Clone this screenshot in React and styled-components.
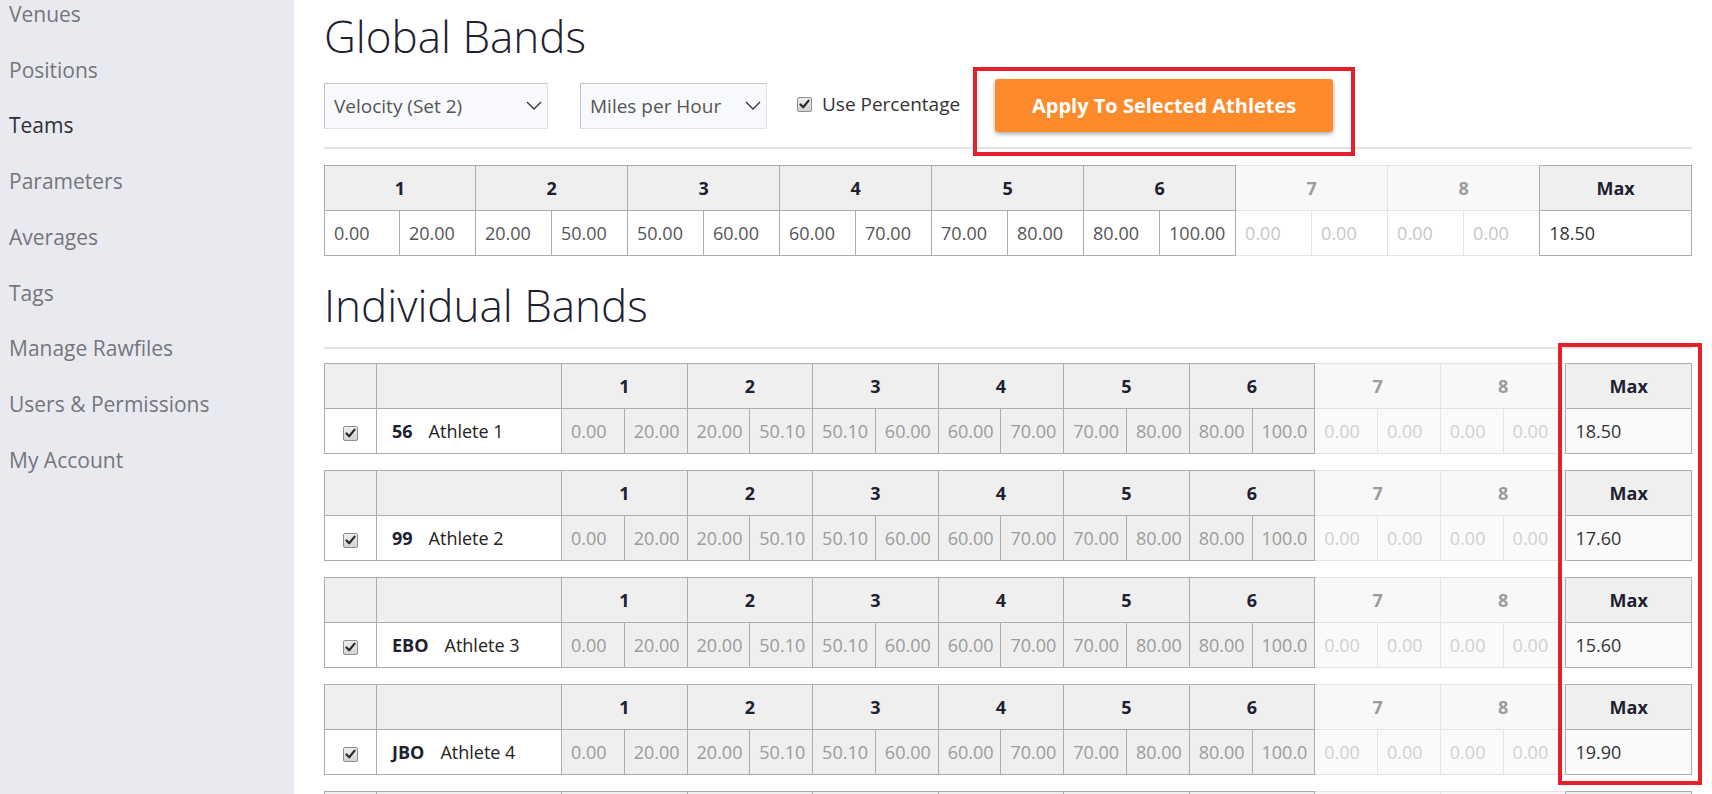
import React from 'react';
import styled, { createGlobalStyle, css } from 'styled-components';

const GlobalStyle = createGlobalStyle`
    html, body {
        margin: 0;
        padding: 0;
        overflow: hidden;
        background: #ffffff;
    }
    body {
        font-family: "Open Sans", "Noto Sans", sans-serif;
        color: #333;
    }
`;

const DARK = '#adadad';
const LIGHT = '#e4e4e4';

const navItems = ['Venues', 'Positions', 'Teams', 'Parameters', 'Averages', 'Tags', 'Manage Rawfiles', 'Users & Permissions', 'My Account'];

const globalBands = [[0, 20], [20, 50], [50, 60], [60, 70], [70, 80], [80, 100], [0, 0], [0, 0]];
const athleteBands = [[0, 20], [20, 50.1], [50.1, 60], [60, 70], [70, 80], [80, 100], [0, 0], [0, 0]];

const athletes = [
    { code: '56', name: 'Athlete 1', max: '18.50' },
    { code: '99', name: 'Athlete 2', max: '17.60' },
    { code: 'EBO', name: 'Athlete 3', max: '15.60' },
    { code: 'JBO', name: 'Athlete 4', max: '19.90' },
    { code: 'KBO', name: 'Athlete 5', max: '16.80' },
];

const fmt = (v) => v.toFixed(2);

const App = () => {
    return (
        <>
            <GlobalStyle />
            <Layout>
                <Sidebar>
                    <NavList>
                        {navItems.map(item => (
                            <NavItem key={item} $active={item === 'Teams'}>{item}</NavItem>
                        ))}
                    </NavList>
                </Sidebar>
                <Main>
                    <Content>
                        <Title>Global Bands</Title>
                        <Controls>
                            <SelectBox $w={224} $mr={32}>
                                Velocity (Set 2) <Chevron />
                            </SelectBox>
                            <SelectBox $w={187} $mr={30}>
                                Miles per Hour <Chevron />
                            </SelectBox>
                            <CheckLabel>
                                <Check />
                                Use Percentage
                            </CheckLabel>
                            <Highlighted>
                                <ApplyButton>Apply To Selected Athletes</ApplyButton>
                            </Highlighted>
                        </Controls>
                        <Divider $mt={15} />
                        <BandTable style={{ marginTop: 16 }}>
                            <colgroup>
                                {Array.from({ length: 18 }).map((_, i) => <col key={i} style={{ width: 76 }} />)}
                            </colgroup>
                            <thead>
                                <tr>
                                    {globalBands.map((_, i) => (
                                        <HeadCell key={i} colSpan={2} $muted={i > 5} $first={i === 0} $edge={i === 7}>{i + 1}</HeadCell>
                                    ))}
                                    <HeadCell colSpan={2}>Max</HeadCell>
                                </tr>
                            </thead>
                            <tbody>
                                <tr>
                                    {globalBands.map(([lo, hi], i) => (
                                        <React.Fragment key={i}>
                                            <ValueCell $tone={i > 5 ? 'muted' : 'plain'} $first={i === 0}>
                                                <ValueInput readOnly value={fmt(lo)} />
                                            </ValueCell>
                                            <ValueCell $tone={i > 5 ? 'muted' : 'plain'} $edge={i === 7}>
                                                <ValueInput readOnly value={fmt(hi)} />
                                            </ValueCell>
                                        </React.Fragment>
                                    ))}
                                    <ValueCell colSpan={2} $tone="max">
                                        <ValueInput readOnly value="18.50" />
                                    </ValueCell>
                                </tr>
                            </tbody>
                        </BandTable>

                        <Title style={{ marginTop: 23 }}>Individual Bands</Title>
                        <Divider $mt={16} />
                        <AthleteList>
                            {athletes.map(a => (
                                <AthleteTable key={a.code} athlete={a} />
                            ))}
                            <MaxHighlight />
                        </AthleteList>
                    </Content>
                </Main>
            </Layout>
        </>
    );
};

const AthleteTable = ({ athlete }) => (
    <BandTable>
        <colgroup>
            <col style={{ width: 53 }} />
            <col style={{ width: 185 }} />
            {Array.from({ length: 18 }).map((_, i) => <col key={i} style={{ width: 62.78 }} />)}
        </colgroup>
        <thead>
            <tr>
                <HeadCell $first />
                <HeadCell />
                {athleteBands.map((_, i) => (
                    <HeadCell key={i} colSpan={2} $muted={i > 5} $edge={i === 7}>{i + 1}</HeadCell>
                ))}
                <HeadCell colSpan={2}>Max</HeadCell>
            </tr>
        </thead>
        <tbody>
            <tr>
                <ValueCell $tone="plain" $first $center>
                    <Check />
                </ValueCell>
                <ValueCell $tone="plain">
                    <NameBox>
                        <Code>{athlete.code}</Code>
                        {athlete.name}
                    </NameBox>
                </ValueCell>
                {athleteBands.map(([lo, hi], i) => (
                    <React.Fragment key={i}>
                        <ValueCell $tone={i > 5 ? 'faded' : 'filled'}>
                            <ValueInput readOnly value={fmt(lo)} $tight />
                        </ValueCell>
                        <ValueCell $tone={i > 5 ? 'faded' : 'filled'} $edge={i === 7}>
                            <ValueInput readOnly value={fmt(hi)} $tight />
                        </ValueCell>
                    </React.Fragment>
                ))}
                <ValueCell colSpan={2} $tone="maxFilled">
                    <ValueInput readOnly value={athlete.max} />
                </ValueCell>
            </tr>
        </tbody>
    </BandTable>
);

const Chevron = () => (
    <svg width="16" height="9" viewBox="0 0 16 9" fill="none">
        <path d="M1 1 L8 8 L15 1" stroke="#333" strokeWidth="1.3" />
    </svg>
);

const Check = () => (
    <CheckBox>
        <svg width="11" height="10" viewBox="0 0 11 10">
            <path d="M1.5 5.5 L4.2 8.3 L9.6 1.6" stroke="#2b2b2b" strokeWidth="2.2" fill="none" strokeLinecap="round" strokeLinejoin="round" />
        </svg>
    </CheckBox>
);

export default App;

const Layout = styled.div`
    display: flex;
    height: 100vh;
`;

const Sidebar = styled.nav`
    width: 294px;
    flex: none;
    background: #e9eaf0;
    padding-left: 9px;
    box-sizing: border-box;
    overflow: hidden;
`;

const NavList = styled.ul`
    list-style: none;
    margin: -13px 0 0;
    padding: 0;
`;

const NavItem = styled.li`
    font-size: 21px;
    line-height: 55.7px;
    white-space: nowrap;
    color: ${props => props.$active ? '#2e2e36' : '#75757d'};
`;

const Main = styled.main`
    flex: 1;
    min-width: 0;
    padding: 10px 20px 0 30px;
    box-sizing: border-box;
    overflow: hidden;
`;

const Content = styled.div`
    width: 1368px;
`;

const Title = styled.h1`
    margin: 0;
    font-size: 44px;
    line-height: 52px;
    font-weight: 300;
    color: #1d2130;
`;

const Controls = styled.div`
    display: flex;
    align-items: center;
    height: 53px;
    margin-top: 17px;
`;

const SelectBox = styled.div`
    width: ${props => props.$w}px;
    margin-right: ${props => props.$mr}px;
    height: 46px;
    box-sizing: border-box;
    display: flex;
    align-items: center;
    justify-content: space-between;
    padding: 0 5px 0 9px;
    background: #f8f9fc;
    border: 1px solid #e2e2e2;
    border-left-color: #c2c2c2;
    border-top-color: #c8c8c8;
    font-size: 19px;
    color: #555;
    white-space: nowrap;
`;

const CheckLabel = styled.label`
    display: flex;
    align-items: center;
    gap: 10px;
    font-size: 19px;
    color: #333;
    margin-right: 35px;
    padding-bottom: 3px;
`;

const CheckBox = styled.span`
    width: 15px;
    height: 15px;
    box-sizing: border-box;
    display: inline-flex;
    align-items: center;
    justify-content: center;
    border: 1px solid #8e8e8e;
    border-radius: 2px;
    background: linear-gradient(#eeeeee, #d3d3d3);
    vertical-align: middle;
`;

const Highlighted = styled.div`
    position: relative;

    &::after {
        content: '';
        position: absolute;
        top: -12px;
        left: -22px;
        right: -22px;
        bottom: -24px;
        border: 4px solid #e3202b;
        pointer-events: none;
    }
`;

const ApplyButton = styled.button`
    display: block;
    width: 338px;
    height: 53px;
    border: none;
    border-radius: 3px;
    background: #fd8a2b;
    color: #ffffff;
    font-family: "Open Sans", sans-serif;
    font-size: 20px;
    font-weight: 700;
    box-shadow: 0 2px 4px rgba(0, 0, 0, 0.35);
    cursor: pointer;
`;

const Divider = styled.div`
    height: 2px;
    background: #e3e3e3;
    margin-top: ${props => props.$mt}px;
`;

const BandTable = styled.table`
    width: 1368px;
    table-layout: fixed;
    border-collapse: separate;
    border-spacing: 0;
    font-size: 18px;

    thead tr {
        height: 46px;
    }

    tbody tr {
        height: 45px;
    }
`;

const HeadCell = styled.th`
    padding: 0;
    text-align: center;
    font-weight: 700;
    background: #efefef;
    color: #1d2130;
    border-top: 1px solid ${DARK};
    border-right: 1px solid ${DARK};
    border-bottom: 1px solid ${DARK};

    ${props => props.$first && css`
        border-left: 1px solid ${DARK};
    `}

    ${props => props.$muted && css`
        background: #f8f8f8;
        color: #9c9c9c;
        border-top-color: ${LIGHT};
        border-right-color: ${LIGHT};
        border-bottom-color: ${LIGHT};
    `}

    ${props => props.$edge && css`
        border-right-color: ${DARK};
    `}
`;

const tones = {
    plain: { bg: '#ffffff', fg: '#555555', line: DARK },
    muted: { bg: '#ffffff', fg: '#c6c6c6', line: LIGHT },
    max: { bg: '#ffffff', fg: '#333333', line: DARK },
    filled: { bg: '#efefef', fg: '#9b9b9b', line: DARK },
    faded: { bg: '#fafafa', fg: '#d0d0d0', line: LIGHT },
    maxFilled: { bg: '#fafafa', fg: '#333333', line: DARK },
};

const ValueCell = styled.td`
    padding: 0;
    background: ${props => tones[props.$tone].bg};
    color: ${props => tones[props.$tone].fg};
    border-right: 1px solid ${props => tones[props.$tone].line};
    border-bottom: 1px solid ${props => tones[props.$tone].line};
    text-align: ${props => props.$center ? 'center' : 'left'};
    vertical-align: middle;

    ${props => props.$first && css`
        border-left: 1px solid ${DARK};
    `}

    ${props => props.$edge && css`
        border-right-color: ${DARK};
    `}
`;

const ValueInput = styled.input`
    display: block;
    width: 100%;
    height: 44px;
    box-sizing: border-box;
    border: 0;
    margin: 0;
    padding: 0 ${props => props.$tight ? 6 : 2}px 0 9px;
    background: transparent;
    font-family: inherit;
    font-size: 18px;
    color: inherit;
    outline: none;
`;

const NameBox = styled.div`
    padding-left: 15px;
    font-size: 18px;
    color: #222;
    white-space: nowrap;
`;

const Code = styled.b`
    font-weight: 700;
    color: #1d2130;
    margin-right: 16px;
`;

const AthleteList = styled.div`
    position: relative;
    display: flex;
    flex-direction: column;
    gap: 16px;
    margin-top: 14px;
`;

const MaxHighlight = styled.div`
    position: absolute;
    top: -20px;
    right: -10px;
    width: 144px;
    height: 442px;
    box-sizing: border-box;
    border: 4px solid #e3202b;
    pointer-events: none;
`;
